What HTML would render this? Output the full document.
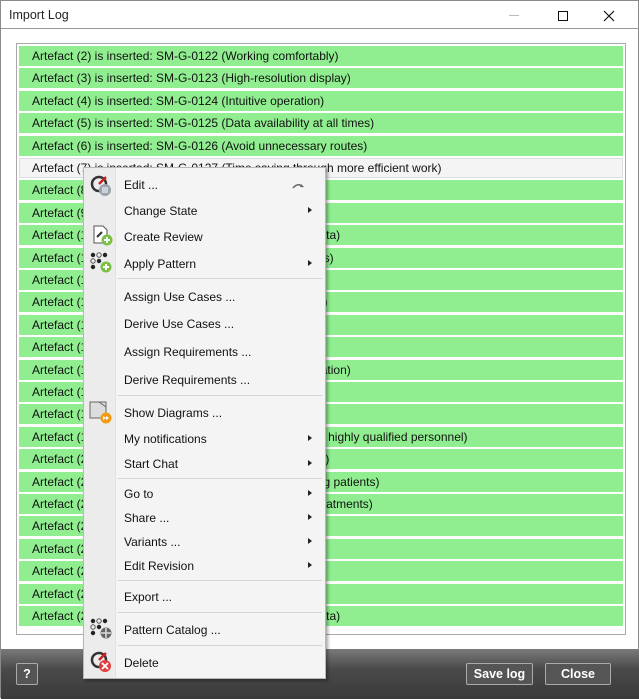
<!DOCTYPE html>
<html><head><style>
*{margin:0;padding:0;box-sizing:border-box}
body{width:639px;height:698px;background:#fff;font-family:"Liberation Sans",sans-serif;font-size:12px;color:#111;position:relative;overflow:hidden}
.win{position:absolute;left:0;top:0;width:639px;height:698px;border:1px solid #8a8a8a;background:#fff}
.title{position:absolute;left:8px;top:7px;font-size:12.5px;color:#222}
.tb{position:absolute;top:0;height:28px;border-bottom:1px solid #999;left:0;width:639px}
.list{position:absolute;left:15px;top:42px;width:610px;height:592px;border:1px solid #aaa;background:#fff}
.row{position:absolute;left:2px;width:604px;height:20px;background:#90ee90;padding-left:13px;line-height:20px;white-space:nowrap;font-size:12px}
.row.sel{background:#f4f4f4;border:1px solid #ddd;line-height:18px;padding-left:12px}
.bar{position:absolute;left:0;top:648px;width:639px;height:50px;background:linear-gradient(#7a7a7a,#4a4a4a 40%,#3a3a3a)}
.btn{position:absolute;top:662px;height:22px;border:1px solid #aaa;border-radius:2px;color:#fff;font-weight:bold;font-size:12.5px;text-align:center;line-height:20px;background:#555}
.menu{position:absolute;left:82px;top:166px;width:243px;height:512px;background:#f4f4f4;border:1px solid #b8b8b8;box-shadow:2px 2px 3px rgba(0,0,0,.35)}
.ic{position:absolute;left:0;top:0;width:32px;height:510px;background:#ececec;border-right:1px solid #e2e2e2}
.mi{position:absolute;left:40px;font-size:12px;color:#111;line-height:14px}
.ar{position:absolute;left:224px;width:0;height:0;border-top:3.5px solid transparent;border-bottom:3.5px solid transparent;border-left:4px solid #222}
.sep{position:absolute;left:34px;width:204px;height:1px;background:#d4d4d4}
</style></head><body>
<div class="win">
<div class="tb"></div>
<div class="title">Import Log</div>
<div style="position:absolute;left:508px;top:14px;width:10px;height:1px;background:#bbb"></div>
<div style="position:absolute;left:557px;top:10px;width:10px;height:10px;border:1px solid #111"></div>
<svg style="position:absolute;left:602px;top:9px" width="12" height="12"><path d="M1 1L11 11M11 1L1 11" stroke="#111" stroke-width="1.2"/></svg>
<div class="list">
<div class="row" style="top:2px">Artefact (2) is inserted: SM-G-0122 (Working comfortably)</div>
<div class="row" style="top:24.4px">Artefact (3) is inserted: SM-G-0123 (High-resolution display)</div>
<div class="row" style="top:46.8px">Artefact (4) is inserted: SM-G-0124 (Intuitive operation)</div>
<div class="row" style="top:69.2px">Artefact (5) is inserted: SM-G-0125 (Data availability at all times)</div>
<div class="row" style="top:91.6px">Artefact (6) is inserted: SM-G-0126 (Avoid unnecessary routes)</div>
<div class="row sel" style="top:114px">Artefact (7) is inserted: SM-G-0127 (Time saving through more efficient work)</div>
<div class="row" style="top:136.4px">Artefact (8) is inserted: SM-G-0128 (Fast)</div>
<div class="row" style="top:158.8px">Artefact (9) is inserted: SM-G-0129 (Safe)</div>
<div class="row" style="top:181.2px">Artefact (10) is inserted: SM-G-0130 (Secure patient data)</div>
<div class="row" style="top:203.6px">Artefact (11) is inserted: SM-G-0131 (Cost-effectiveness)</div>
<div class="row" style="top:226px">Artefact (12) is inserted: SM-G-0132 (Reliable results)</div>
<div class="row" style="top:248.4px">Artefact (13) is inserted: SM-G-0133 (Service provision)</div>
<div class="row" style="top:270.8px">Artefact (14) is inserted: SM-G-0134 (Better treatment)</div>
<div class="row" style="top:293.2px">Artefact (15) is inserted: SM-G-0135 (Mobility)</div>
<div class="row" style="top:315.6px">Artefact (16) is inserted: SM-G-0136 (Access to information)</div>
<div class="row" style="top:338px">Artefact (17) is inserted: SM-G-0137 (Interactions)</div>
<div class="row" style="top:360.4px">Artefact (18) is inserted: SM-G-0138 (Quality)</div>
<div class="row" style="top:382.8px">Artefact (19) is inserted: SM-G-0139 (Attractiveness for highly qualified personnel)</div>
<div class="row" style="top:405.2px">Artefact (20) is inserted: SM-G-0140 (Fewer treatments)</div>
<div class="row" style="top:427.6px">Artefact (21) is inserted: SM-G-0141 (Reputation among patients)</div>
<div class="row" style="top:450px">Artefact (22) is inserted: SM-G-0142 (Better medical treatments)</div>
<div class="row" style="top:472.4px">Artefact (23) is inserted: SM-G-0143 (Safety)</div>
<div class="row" style="top:494.8px">Artefact (24) is inserted: SM-G-0144 (Shorter times )</div>
<div class="row" style="top:517.2px">Artefact (25) is inserted: SM-G-0145 (Higher capacity)</div>
<div class="row" style="top:539.6px">Artefact (26) is inserted: SM-G-0146 (Higher speed)</div>
<div class="row" style="top:562px">Artefact (27) is inserted: SM-G-0147 (Secure patient data)</div>
</div>
<div class="bar"></div>
<div class="btn" style="left:15px;width:22px">?</div>
<div class="btn" style="left:465px;width:67px">Save log</div>
<div class="btn" style="left:544px;width:66px">Close</div>
<div class="menu">
<div class="ic"></div>
<svg style="position:absolute;left:6px;top:6px" width="24" height="24"><circle cx="9" cy="10" r="7" fill="none" stroke="#333" stroke-width="2.5"/><path d="M9 10L16 3" stroke="#c22" stroke-width="2.5"/><circle cx="15" cy="16" r="6" fill="#9aa4b0"/><path d="M12 14h6M12 16h6M12 18h6" stroke="#fff"/></svg>
<svg style="position:absolute;left:8px;top:57px" width="22" height="22"><path d="M2 1h9l4 4v13H2z" fill="#fff" stroke="#555"/><path d="M5 12l5-5" stroke="#333" stroke-width="2"/><circle cx="15" cy="15" r="5.5" fill="#7ac143"/><path d="M15 12v6M12 15h6" stroke="#fff" stroke-width="2"/></svg>
<svg style="position:absolute;left:6px;top:84px" width="24" height="22"><circle cx="3" cy="3" r="2.2" fill="#222"/><circle cx="9" cy="3" r="2.2" fill="none" stroke="#555"/><circle cx="15" cy="3" r="2.2" fill="#222"/><circle cx="3" cy="9" r="2.2" fill="none" stroke="#555"/><circle cx="9" cy="9" r="2.2" fill="#222"/><circle cx="3" cy="15" r="2.2" fill="#222"/><circle cx="16" cy="15" r="5.5" fill="#7ac143"/><path d="M16 12v6M13 15h6" stroke="#fff" stroke-width="2"/></svg>
<svg style="position:absolute;left:5px;top:233px" width="24" height="24"><rect x="1" y="1" width="16" height="16" fill="#ddd" stroke="#666"/><path d="M10 1l7 5" stroke="#666"/><circle cx="17" cy="17" r="5.5" fill="#f39c12"/><path d="M14 15l3 2-3 2zM17 15l3 2-3 2z" fill="#fff"/></svg>
<svg style="position:absolute;left:6px;top:450px" width="24" height="22"><circle cx="3" cy="3" r="2.2" fill="#222"/><circle cx="9" cy="3" r="2.2" fill="none" stroke="#555"/><circle cx="15" cy="3" r="2.2" fill="#222"/><circle cx="3" cy="9" r="2.2" fill="none" stroke="#555"/><circle cx="9" cy="9" r="2.2" fill="#222"/><circle cx="3" cy="15" r="2.2" fill="#222"/><circle cx="16" cy="15" r="5.5" fill="#666"/><path d="M16 10v10M11 15h10" stroke="#ddd" stroke-width="1.5"/></svg>
<svg style="position:absolute;left:6px;top:482px" width="24" height="24"><circle cx="9" cy="10" r="7" fill="none" stroke="#333" stroke-width="2.5"/><path d="M9 10L16 3" stroke="#c22" stroke-width="2.5"/><circle cx="15" cy="16" r="6" fill="#e04040"/><path d="M12 13l6 6M18 13l-6 6" stroke="#fff" stroke-width="1.8"/></svg>
<div class="mi" style="top:10px">Edit ...</div>
<svg style="position:absolute;left:208px;top:14px" width="14" height="8"><path d="M1 6Q6 0 11 5" fill="none" stroke="#666" stroke-width="1.5"/><path d="M9 2l3 3-4 0z" fill="#666"/></svg>
<div class="mi" style="top:36px">Change State</div><div class="ar" style="top:39px"></div>
<div class="mi" style="top:62px">Create Review</div>
<div class="mi" style="top:89px">Apply Pattern</div><div class="ar" style="top:92px"></div>
<div class="sep" style="top:110px"></div>
<div class="mi" style="top:122px">Assign Use Cases ...</div>
<div class="mi" style="top:149px">Derive Use Cases ...</div>
<div class="mi" style="top:177px">Assign Requirements ...</div>
<div class="mi" style="top:205px">Derive Requirements ...</div>
<div class="sep" style="top:227px"></div>
<div class="mi" style="top:238px">Show Diagrams ...</div>
<div class="mi" style="top:264px">My notifications</div><div class="ar" style="top:267px"></div>
<div class="mi" style="top:289px">Start Chat</div><div class="ar" style="top:292px"></div>
<div class="sep" style="top:310px"></div>
<div class="mi" style="top:319px">Go to</div><div class="ar" style="top:322px"></div>
<div class="mi" style="top:343px">Share ...</div><div class="ar" style="top:346px"></div>
<div class="mi" style="top:367px">Variants ...</div><div class="ar" style="top:370px"></div>
<div class="mi" style="top:391px">Edit Revision</div><div class="ar" style="top:394px"></div>
<div class="sep" style="top:412px"></div>
<div class="mi" style="top:422px">Export ...</div>
<div class="sep" style="top:444px"></div>
<div class="mi" style="top:455px">Pattern Catalog ...</div>
<div class="sep" style="top:477px"></div>
<div class="mi" style="top:488px">Delete</div>
</div>
</div>
</body></html>
